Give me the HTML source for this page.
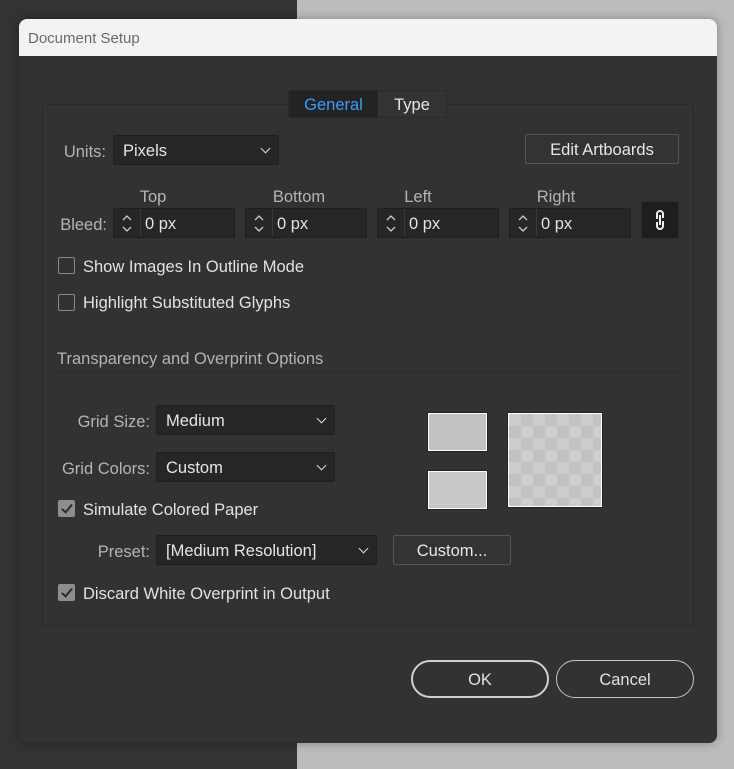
<!DOCTYPE html>
<html><head><style>
*{box-sizing:border-box;margin:0;padding:0}
body{width:734px;height:769px;position:relative;overflow:hidden;background:#bcbcbc;font-family:"Liberation Sans",sans-serif;font-size:16.5px;color:#e2e2e2}
.a{position:absolute}
.dd{position:absolute;background:#262626;border:1px solid #1e1e1e;border-radius:2px;padding-left:9px;line-height:31px;color:#e6e6e6}
.dd:after{content:"";position:absolute;right:9px;top:9px;width:6px;height:6px;border-right:1.6px solid #ddd;border-bottom:1.6px solid #ddd;transform:rotate(45deg)}
.lbl{position:absolute;color:#b4b4b4;text-align:right}
.btn{position:absolute;border:1px solid #555;border-radius:2px;background:#333;text-align:center;color:#e6e6e6}
.fld{position:absolute;height:30px;width:122px;background:#262626;border:1px solid #1e1e1e;border-radius:2px}
.fld .sp{position:absolute;left:0;top:0;width:27px;height:28px;border-right:1px solid #3a3a3a}
.fld .v{position:absolute;left:31px;top:6px}
.cb{position:absolute;left:58px;width:17px;height:17px;border:1px solid #8a8a8a;border-radius:2px}
.cb.on{background:#8e8e8e;border-color:#8e8e8e}
.cb.on:after{content:"";position:absolute;left:5px;top:1px;width:4px;height:9px;border-right:2px solid #2a2a2a;border-bottom:2px solid #2a2a2a;transform:rotate(40deg)}
.ct{position:absolute;left:83px}
</style></head><body>
<div class="a" style="left:0;top:0;width:297px;height:769px;background:#333"></div>
<div class="a" style="left:19px;top:19px;width:698px;height:724px;background:#323232;border-radius:8px;overflow:hidden;box-shadow:0 0 10px rgba(0,0,0,.3)">
 <div class="a" style="left:0;top:0;width:698px;height:37px;background:#f3f3f3;color:#6a6a6a;font-size:15px;padding:11px 0 0 9px">Document Setup</div>
</div>
<div class="a" style="left:42px;top:104px;width:652px;height:522px;border:1px solid #2a2a2a;border-radius:3px"></div>
<div class="a" style="left:288px;top:90px;width:159px;height:28px;border:1px solid #2a2a2a;background:#333"></div>
<div class="a" style="left:289px;top:91px;width:89px;height:26px;background:#232323;color:#3d9bff;text-align:center;line-height:29px">General</div>
<div class="a" style="left:378px;top:91px;width:68px;height:26px;color:#e6e6e6;text-align:center;line-height:29px">Type</div>

<div class="lbl" style="left:40px;width:66px;top:143px">Units:</div>
<div class="dd" style="left:113px;top:135px;width:166px;height:30px">Pixels</div>
<div class="btn" style="left:525px;top:134px;width:154px;height:30px;line-height:31px">Edit Artboards</div>

<div class="lbl" style="left:123px;width:60px;top:188px;text-align:center">Top</div>
<div class="lbl" style="left:259px;width:80px;top:188px;text-align:center">Bottom</div>
<div class="lbl" style="left:388px;width:60px;top:188px;text-align:center">Left</div>
<div class="lbl" style="left:526px;width:60px;top:188px;text-align:center">Right</div>
<div class="lbl" style="left:40px;width:67px;top:216px">Bleed:</div>
<div class="fld" style="left:113px;top:208px"><div class="sp"><svg width="27" height="28"><path d="M9 11l4-4 4 4M9 18l4 4 4-4" fill="none" stroke="#ccc" stroke-width="1.3"/></svg></div><span class="v">0 px</span></div>
<div class="fld" style="left:245px;top:208px"><div class="sp"><svg width="27" height="28"><path d="M9 11l4-4 4 4M9 18l4 4 4-4" fill="none" stroke="#ccc" stroke-width="1.3"/></svg></div><span class="v">0 px</span></div>
<div class="fld" style="left:377px;top:208px"><div class="sp"><svg width="27" height="28"><path d="M9 11l4-4 4 4M9 18l4 4 4-4" fill="none" stroke="#ccc" stroke-width="1.3"/></svg></div><span class="v">0 px</span></div>
<div class="fld" style="left:509px;top:208px"><div class="sp"><svg width="27" height="28"><path d="M9 11l4-4 4 4M9 18l4 4 4-4" fill="none" stroke="#ccc" stroke-width="1.3"/></svg></div><span class="v">0 px</span></div>
<div class="a" style="left:641px;top:201px;width:38px;height:38px;background:#1e1e1e;border:1px solid #2a2a2a;border-radius:2px">
<svg width="36" height="36"><path d="M15 17v-5a3 3 0 0 1 6 0v4M21 19v5a3 3 0 0 1-6 0v-4M18 13v10" fill="none" stroke="#eee" stroke-width="2"/></svg></div>

<div class="cb" style="top:257px"></div><div class="ct" style="top:258px">Show Images In Outline Mode</div>
<div class="cb" style="top:294px"></div><div class="ct" style="top:294px">Highlight Substituted Glyphs</div>

<div class="a" style="left:57px;top:350px;color:#b4b4b4">Transparency and Overprint Options</div>
<div class="a" style="left:57px;top:372px;width:622px;height:1px;background:#2a2a2a"></div>

<div class="lbl" style="left:40px;width:110px;top:413px">Grid Size:</div>
<div class="dd" style="left:156px;top:405px;width:179px;height:30px">Medium</div>
<div class="lbl" style="left:40px;width:110px;top:460px">Grid Colors:</div>
<div class="dd" style="left:156px;top:452px;width:179px;height:30px">Custom</div>

<div class="a" style="left:427px;top:412px;width:61px;height:40px;border:1px solid #222;background:#fff;padding:1px"><div style="width:100%;height:100%;background:#c2c2c2"></div></div>
<div class="a" style="left:427px;top:470px;width:61px;height:40px;border:1px solid #222;background:#fff;padding:1px"><div style="width:100%;height:100%;background:#c8c8c8"></div></div>
<div class="a" style="left:507px;top:412px;width:96px;height:96px;border:1px solid #222;background:#fff;padding:1px"><div style="width:100%;height:100%;background-color:#cdcdcd;background-image:linear-gradient(45deg,#c2c2c2 25%,transparent 25%,transparent 75%,#c2c2c2 75%),linear-gradient(45deg,#c2c2c2 25%,transparent 25%,transparent 75%,#c2c2c2 75%);background-size:24px 24px;background-position:0 0,12px 12px"></div></div>

<div class="cb on" style="top:500px"></div><div class="ct" style="top:501px">Simulate Colored Paper</div>
<div class="lbl" style="left:40px;width:110px;top:543px">Preset:</div>
<div class="dd" style="left:156px;top:535px;width:221px;height:30px">[Medium Resolution]</div>
<div class="btn" style="left:393px;top:535px;width:118px;height:30px;line-height:31px">Custom...</div>
<div class="cb on" style="top:584px"></div><div class="ct" style="top:585px">Discard White Overprint in Output</div>

<div class="a" style="left:411px;top:660px;width:138px;height:38px;border:2px solid #cfcfcf;border-radius:19px;text-align:center;line-height:37px">OK</div>
<div class="a" style="left:556px;top:660px;width:138px;height:38px;border:1px solid #c4c4c4;border-radius:19px;text-align:center;line-height:39px">Cancel</div>
</body></html>
